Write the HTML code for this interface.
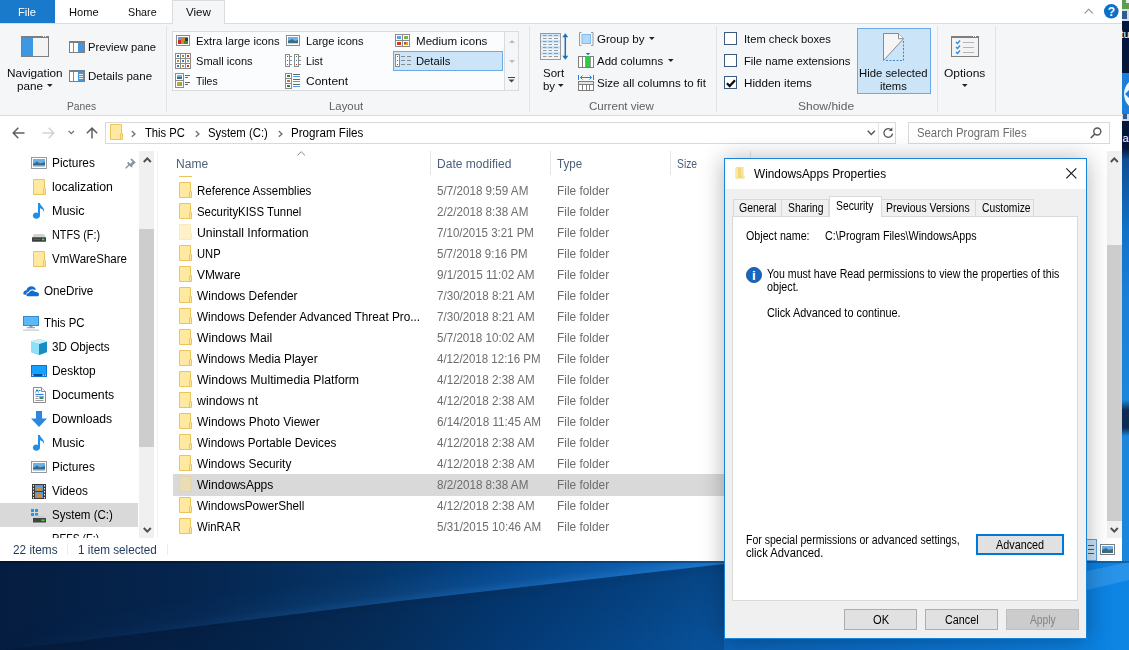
<!DOCTYPE html>
<html><head><meta charset="utf-8"><title>Program Files</title>
<style>
html,body{margin:0;padding:0}
body{width:1129px;height:650px;overflow:hidden;position:relative;font-family:"Liberation Sans",sans-serif;font-size:12px;
 background:#0a3f7c}
.a{position:absolute;box-sizing:border-box}
.t{position:absolute;white-space:nowrap;line-height:16px;height:16px;z-index:4}
.t.nav{z-index:2}
.t.fl{z-index:2}
.t.dlg{z-index:12}
svg{position:absolute;overflow:visible}
#desk{left:0;top:0;width:1129px;height:650px}
#strip{left:1122px;top:0;width:7px;height:561px;overflow:hidden;background:linear-gradient(180deg,#06153a 0,#06153a 148px,#0c4f95 160px,#1272c8 230px,#1a80d8 300px,#1a86dc 400px,#0c2c55 410px,#0c2c55 428px,#1a86dc 436px,#1a86dc 561px)}
#win{left:0;top:0;width:1122px;height:561px;background:#fff;z-index:1}
#tabline{left:0;top:23px;width:1122px;height:1px;background:#dadbdc}
#filetab{left:0;top:0;width:55px;height:23px;background:#1979ca}
#viewtab{left:172px;top:0;width:53px;height:24px;background:#f5f6f7;border:1px solid #dadbdc;border-bottom:none}
#ribbon{left:0;top:24px;width:1122px;height:92px;background:#f5f6f7;border-bottom:1px solid #dadbdc}
.gsep{width:1px;top:26px;height:86px;background:#e2e3e4}
#laybox{left:172px;top:31px;width:347px;height:60px;background:#fbfcfd;border:1px solid #dadbdc}
#layscroll{left:504px;top:31px;width:15px;height:60px;border:1px solid #dadbdc;background:#f5f6f7}
.sel{background:#cce4f7;border:1px solid #6aaae8}
#addr{left:105px;top:122px;width:791px;height:22px;border:1px solid #d9d9d9;background:#fff}
#search{left:908px;top:122px;width:202px;height:22px;border:1px solid #d9d9d9;background:#fff}
#navsb{left:139px;top:151px;width:15px;height:387px;background:#f0f0f0;z-index:3}
#navthumb{left:139px;top:229px;width:15px;height:218px;background:#cdcdcd;z-index:3}
#navsel{left:0;top:503px;width:138px;height:24px;background:#d9d9d9}
#flsb{left:1107px;top:151px;width:15px;height:387px;background:#f0f0f0}
#flthumb{left:1107px;top:245px;width:15px;height:276px;background:#cdcdcd}
#rowsel{left:173px;top:474px;width:700px;height:22px;background:#d9d9d9}
.csep{width:1px;top:151px;height:24px;background:#e5e5e5}
#status{left:0;top:538px;width:1122px;height:23px;background:#fff;z-index:3}
.ssep{width:1px;top:544px;height:11px;background:#ececec;z-index:4}
.cb{width:13px;height:13px;left:724px;border:1px solid #3b5a82;background:#fff}
/* dialog */
#dlg{left:724px;top:158px;width:363px;height:481px;background:#f0f0f0;border:1px solid #1883d7;z-index:10;box-shadow:0 1px 22px rgba(0,0,0,.30)}
#dtitle{left:725px;top:159px;width:361px;height:30px;background:#fff;z-index:11}
.tab{background:#f0f0f0;border:1px solid #d9d9d9;border-bottom:none;z-index:11;top:199px;height:18px}
#tabsel{background:#fff;top:196px;height:21px;z-index:13;border:1px solid #d9d9d9;border-bottom:none}
#tabpage{left:732px;top:216px;width:346px;height:385px;background:#fff;border:1px solid #d9d9d9;z-index:11}
.btn{background:#e1e1e1;border:1px solid #adadad;z-index:12;height:21px}
svg.i{z-index:3}
.t.dlg{z-index:14}
.t{transform-origin:0 0}

</style></head><body>
<svg width="0" height="0" style="left:-10px;top:-10px">
 <defs>
  <symbol id="folder" viewBox="0 0 13 16">
   <path d="M0.5 0.5h11v9h1v6h-12z" fill="#ffe8a0" stroke="#eac55c"/>
   <path d="M10.5 9.5v6" stroke="#eac55c" fill="none"/>
  </symbol>
  <symbol id="folderh" viewBox="0 0 13 16">
   <path d="M0.5 0.5h11v9h1v6h-12z" fill="#ffe38a" fill-opacity=".45" stroke="#e8c64c" stroke-opacity=".5" stroke-dasharray="1 1"/>
  </symbol>
 </defs>
</svg>
<div class="a" id="desk"><svg width="1129" height="650" style="left:0;top:0">
<defs>
<linearGradient id="dg" x1="0" y1="0" x2="1129" y2="0" gradientUnits="userSpaceOnUse">
<stop offset="0" stop-color="#051d40"/><stop offset=".18" stop-color="#052650"/><stop offset=".33" stop-color="#063568"/><stop offset=".45" stop-color="#04468c"/><stop offset=".55" stop-color="#0654a2"/><stop offset=".64" stop-color="#0a62b6"/><stop offset=".8" stop-color="#0a6fcb"/><stop offset=".96" stop-color="#0a80e0"/><stop offset="1" stop-color="#0f86e4"/>
</linearGradient>
<linearGradient id="dk" x1="400" y1="601" x2="409.500" y2="680" gradientUnits="userSpaceOnUse"><stop offset="0" stop-color="#02142f" stop-opacity=".42"/><stop offset=".15" stop-color="#02142f" stop-opacity=".34"/><stop offset="1" stop-color="#02142f" stop-opacity=".2"/></linearGradient>
<linearGradient id="bm" x1="400" y1="601" x2="396.400" y2="571" gradientUnits="userSpaceOnUse"><stop offset="0" stop-color="#3a96ea" stop-opacity=".38"/><stop offset=".25" stop-color="#3a96ea" stop-opacity=".16"/><stop offset="1" stop-color="#3a96ea" stop-opacity="0"/></linearGradient>
<linearGradient id="hm" x1="0" y1="0" x2="724" y2="0" gradientUnits="userSpaceOnUse"><stop offset="0" stop-color="#000"/><stop offset=".25" stop-color="#333"/><stop offset=".6" stop-color="#aaa"/><stop offset="1" stop-color="#fff"/></linearGradient>
<mask id="mk"><rect x="0" y="540" width="740" height="110" fill="url(#hm)"/></mask>
</defs>
<rect x="0" y="0" width="1129" height="650" fill="url(#dg)"/>
<polygon points="0,651 0,650.600 80,641 400,601 724,564 724,651" fill="url(#dk)"/>
<polygon points="0,650.600 80,641 400,601 724,564 724,540 0,540" fill="url(#bm)" mask="url(#mk)"/>
<polygon points="1087,571 1129,562 1129,580 1087,590" fill="#5ab0f0" fill-opacity=".35"/>
<rect x="0" y="561" width="1129" height="2" fill="#000" fill-opacity=".25"/>
</svg></div>
<div class="a" id="strip">
<div class="a" style="left:0;top:0;width:7px;height:9px;background:#5ca04e"></div>
<div class="a" style="left:4px;top:0;width:3px;height:3px;background:#e8efe6"></div>
<div class="a" style="left:0;top:9px;width:7px;height:12px;background:#d9dde2"></div>
<div class="a" style="left:0;top:11px;width:5px;height:8px;background:#2f5a94"></div>
<span style="position:absolute;left:-1.500px;top:28px;font-size:11px;line-height:12px;color:#fff;white-space:nowrap">tu</span>
<div class="a" style="left:0;top:73px;width:7px;height:41px;background:#1a7fd8"></div>
<div class="a" style="left:1.500px;top:77px;width:34px;height:34px;border-radius:17px;background:#f4f6f8"></div>
<div class="a" style="left:3px;top:89px;width:0;height:0;border-top:5px solid transparent;border-bottom:5px solid transparent;border-right:5px solid #1a7fd8"></div>
<div class="a" style="left:0;top:114px;width:7px;height:7px;background:#d4d9df"></div>
<div class="a" style="left:1px;top:114px;width:4px;height:5px;background:#2f5a94"></div>
<span style="position:absolute;left:.5px;top:132px;font-size:11px;line-height:12px;color:#fff;white-space:nowrap">ar</span>
</div>
<div class="a" id="win"></div>
<div class="a" id="tabline" style="z-index:1"></div>
<div class="a" id="ribbon" style="z-index:1"></div>
<div class="a" id="filetab" style="z-index:2"></div>
<div class="a" id="viewtab" style="z-index:2"></div>
<div class="a gsep" style="left:166px;z-index:2"></div>
<div class="a gsep" style="left:529px;z-index:2"></div>
<div class="a gsep" style="left:716px;z-index:2"></div>
<div class="a gsep" style="left:937px;z-index:2"></div>
<div class="a gsep" style="left:995px;z-index:2"></div>
<div class="a" id="laybox" style="z-index:2"></div>
<div class="a" id="layscroll" style="z-index:2"></div>
<div class="a sel" style="left:393px;top:51px;width:110px;height:20px;z-index:3"></div>
<div class="a sel" style="left:857px;top:28px;width:74px;height:66px;z-index:3"></div>
<div class="a cb" style="top:32px;z-index:3"></div>
<div class="a cb" style="top:54px;z-index:3"></div>
<div class="a cb" style="top:76px;z-index:3"></div>
<div class="a" id="addr" style="z-index:2"></div>
<div class="a" style="left:878px;top:123px;width:1px;height:20px;background:#e5e5e5;z-index:3"></div>
<div class="a" id="search" style="z-index:2"></div>
<div class="a" id="navsel" style="z-index:1"></div>
<div class="a" id="navsb"></div>
<div class="a" id="navthumb"></div>
<div class="a" id="rowsel" style="z-index:1"></div>
<div class="a" id="flsb" style="z-index:2"></div>
<div class="a" id="flthumb" style="z-index:2"></div>
<div class="a csep" style="left:430px;z-index:2"></div>
<div class="a csep" style="left:550px;z-index:2"></div>
<div class="a csep" style="left:670px;z-index:2"></div>
<div class="a csep" style="left:750px;z-index:2"></div>
<div class="a" style="left:157px;top:151px;width:1px;height:387px;background:#f2f2f2;z-index:2"></div>
<div class="a" id="status"></div>
<div class="a ssep" style="left:67px"></div>
<div class="a ssep" style="left:167px"></div>
<!-- ===== ribbon icons ===== -->
<!-- nav pane big icon 28x21 @21,36 -->
<svg class="i" style="left:21px;top:36px" width="28" height="21"><rect x=".5" y=".5" width="27" height="20" fill="#f3f3f3" stroke="#7e7e7e"/><rect x="0" y="0" width="28" height="2" fill="#7e7e7e"/><rect x="1" y="2" width="11" height="18" fill="#3e97e1"/><rect x="22" y="0" width="1" height="1" fill="#fff"/><rect x="24" y="0" width="1" height="1" fill="#fff"/></svg>
<!-- preview pane 16x12 @69,41 -->
<svg class="i" style="left:69px;top:41px" width="16" height="12"><rect x=".5" y=".5" width="15" height="11" fill="#fff" stroke="#7e7e7e"/><rect x="0" y="0" width="16" height="2" fill="#7e7e7e"/><rect x="4" y="2" width="1" height="9" fill="#8a8a8a"/><rect x="9" y="2" width="6" height="9" fill="#3e97e1"/></svg>
<!-- details pane 16x12 @69,70 -->
<svg class="i" style="left:69px;top:70px" width="16" height="12"><rect x=".5" y=".5" width="15" height="11" fill="#fff" stroke="#7e7e7e"/><rect x="0" y="0" width="16" height="2" fill="#7e7e7e"/><rect x="4" y="2" width="1" height="9" fill="#8a8a8a"/><rect x="9" y="2" width="6" height="9" fill="#3e97e1"/><path d="M10 4.5h4M10 6.5h4M10 8.5h4" stroke="#e6f2fc" stroke-width="1"/></svg>
<!-- dropdown arrows -->
<svg class="i" style="left:47px;top:84px" width="6" height="3"><path d="M0 0h5.6L2.8 3z" fill="#222"/></svg>
<svg class="i" style="left:558px;top:84px" width="6" height="3"><path d="M0 0h5.6L2.8 3z" fill="#222"/></svg>
<svg class="i" style="left:648.5px;top:37px" width="6" height="3"><path d="M0 0h5.6L2.8 3z" fill="#222"/></svg>
<svg class="i" style="left:667.5px;top:59px" width="6" height="3"><path d="M0 0h5.6L2.8 3z" fill="#222"/></svg>
<svg class="i" style="left:962px;top:84px" width="6" height="3"><path d="M0 0h5.6L2.8 3z" fill="#222"/></svg>
<!-- extra large icons 14x11 @176,35 -->
<svg class="i" style="left:176px;top:35px" width="14" height="11"><rect x=".5" y=".5" width="13" height="10" fill="#fff" stroke="#8a8a8a"/><rect x="2" y="2" width="10" height="7" fill="#5aa0e0"/><rect x="2" y="5" width="3" height="4" fill="#d9281e"/><rect x="5" y="3" width="4" height="6" fill="#c98a2c"/><rect x="8" y="6" width="4" height="3" fill="#3d8a3a"/><rect x="9" y="3" width="3" height="3" fill="#26374f"/></svg>
<!-- large icons 14x11 @286,35 -->
<svg class="i" style="left:286px;top:35px" width="14" height="11"><rect x=".5" y=".5" width="13" height="10" fill="#fff" stroke="#8a8a8a"/><rect x="2" y="2" width="10" height="7" fill="#6db3ea"/><path d="M2 6l4-2 3 2 3-1v4H2z" fill="#3f6d7e"/><rect x="2" y="8" width="10" height="1" fill="#b5d9f2"/></svg>
<!-- medium icons 15x13 @395,34 -->
<svg class="i" style="left:395px;top:34px" width="15" height="13"><rect x=".5" y=".5" width="14" height="12" fill="#fff" stroke="#8a8a8a"/><path d="M7.5 0v13M0 6.5h15" stroke="#8a8a8a"/><rect x="2" y="2" width="4" height="3" fill="#5aa0e0"/><rect x="9" y="2" width="4" height="3" fill="#7fae56"/><rect x="2" y="8" width="4" height="3" fill="#d8341e"/><rect x="9" y="8" width="4" height="3" fill="#e7a01e"/><rect x="9" y="8" width="2" height="2" fill="#3a6fb5"/></svg>
<!-- small icons 16x16 @175,53 -->
<svg class="i" style="left:175px;top:53px" width="16" height="16"><rect x=".5" y=".5" width="15" height="15" fill="#fff" stroke="#8a8a8a"/><path d="M5.5 0v16M10.5 0v16M0 5.5h16M0 10.5h16" stroke="#8a8a8a"/><g><rect x="2" y="2" width="2" height="2" fill="#3a78b5"/><rect x="7" y="2" width="2" height="2" fill="#6f9a4e"/><rect x="12" y="2" width="2" height="2" fill="#d8341e"/><rect x="2" y="7" width="2" height="2" fill="#c98a2c"/><rect x="7" y="7" width="2" height="2" fill="#2f80d0"/><rect x="12" y="7" width="2" height="2" fill="#9aa54e"/><rect x="2" y="12" width="2" height="2" fill="#3a78b5"/><rect x="7" y="12" width="2" height="2" fill="#c98a2c"/><rect x="12" y="12" width="2" height="2" fill="#d8341e"/></g></svg>
<!-- list 16x13 @285,54 -->
<svg class="i" style="left:285px;top:54px" width="16" height="13"><g id="lcol"><rect x=".5" y=".5" width="4" height="12" fill="#fff" stroke="#8a8a8a"/><rect x="2" y="2" width="1" height="1" fill="#3f8a3a"/><rect x="2" y="6" width="1" height="1" fill="#2f80d0"/><rect x="2" y="10" width="1" height="1" fill="#d8241e"/><path d="M5 2.5h2M5 6.5h2M5 10.5h2" stroke="#8a8a8a"/></g><g transform="translate(9,0)"><rect x=".5" y=".5" width="4" height="12" fill="#fff" stroke="#8a8a8a"/><rect x="2" y="2" width="1" height="1" fill="#3f8a3a"/><rect x="2" y="6" width="1" height="1" fill="#2f80d0"/><rect x="2" y="10" width="1" height="1" fill="#d8241e"/><path d="M5 2.5h2M5 6.5h2M5 10.5h2" stroke="#8a8a8a"/></g></svg>
<!-- details 16x13 @395,54 -->
<svg class="i" style="left:395px;top:54px" width="16" height="13"><rect x=".5" y=".5" width="4" height="12" fill="#fff" stroke="#8a8a8a"/><rect x="2" y="2" width="1" height="1" fill="#3f8a3a"/><rect x="2" y="6" width="1" height="1" fill="#2f80d0"/><rect x="2" y="10" width="1" height="1" fill="#d8241e"/><path d="M6 2.5h4M12 2.5h4M6 6.5h4M12 6.5h4M6 10.5h4M12 10.5h4" stroke="#8a8a8a"/></svg>
<!-- tiles 16x15 @175,73 -->
<svg class="i" style="left:175px;top:73px" width="16" height="15"><rect x=".5" y=".5" width="8" height="14" fill="#fff" stroke="#8a8a8a"/><path d="M0 7.5h9" stroke="#8a8a8a"/><rect x="2" y="2" width="5" height="4" fill="#6db3ea"/><rect x="2" y="4" width="5" height="2" fill="#3f6d7e"/><rect x="2" y="9" width="5" height="4" fill="#7fae56"/><rect x="2" y="9" width="3" height="3" fill="#dba035"/><path d="M10 2.5h5M10 4.5h3M10 9.5h5M10 11.5h3" stroke="#666"/></svg>
<!-- content 15x16 @285,73 -->
<svg class="i" style="left:285px;top:73px" width="16" height="16"><rect x=".5" y=".5" width="6" height="15" fill="#fff" stroke="#8a8a8a"/><path d="M0 5.5h7M0 10.5h7" stroke="#8a8a8a"/><rect x="2" y="2" width="3" height="2" fill="#3f7a5e"/><rect x="2" y="7" width="3" height="2" fill="#c9762c"/><rect x="2" y="12" width="3" height="2" fill="#3f7a5e"/><path d="M8 1.500h7M8 6.5h7M8 11.5h7" stroke="#666"/><path d="M8 3.500h7M8 8.5h7M8 13.5h7" stroke="#4a9be8"/></svg>
<!-- layout scroll arrows -->
<svg class="i" style="left:509px;top:40px" width="6" height="3"><path d="M0 3h6L3 0z" fill="#b4bcc4"/></svg>
<svg class="i" style="left:509px;top:60px" width="6" height="3"><path d="M0 0h6L3 3z" fill="#b4bcc4"/></svg>
<svg class="i" style="left:508px;top:77px" width="7" height="6"><path d="M0 .5h7" stroke="#444"/><path d="M.5 2.500h6L3.500 5.500z" fill="#444"/></svg>
<!-- sort icon @540,33 29x27 -->
<svg class="i" style="left:540px;top:33px" width="29" height="27"><rect x=".5" y=".5" width="20" height="26" fill="#f4f4f4" stroke="#9a9a9a"/><rect x="1" y="1" width="19" height="3" fill="#cfe5f7"/><rect x="1" y="7" width="19" height="3" fill="#cfe5f7"/><rect x="1" y="13" width="19" height="3" fill="#cfe5f7"/><rect x="1" y="19" width="19" height="3" fill="#cfe5f7"/><path d="M3 2.500h3.500M8.500 2.500h3.500M14 2.500h4M3 5.500h3.500M8.500 5.500h3.500M14 5.500h4M3 8.500h3.500M8.500 8.500h3.500M14 8.500h4M3 11.500h3.500M8.500 11.500h3.500M14 11.500h4M3 14.500h3.500M8.500 14.500h3.500M14 14.500h4M3 17.500h3.500M8.500 17.500h3.500M14 17.500h4M3 20.500h3.500M8.500 20.500h3.500M14 20.500h4M3 23.500h3.500M8.500 23.500h3.500M14 23.500h4" stroke="#9a9a9a"/><path d="M25.300 3v21" stroke="#1e6fc0" stroke-width="1.500"/><path d="M22.300 4.300L25.300 .3l3 4zM22.300 22.700l3 4 3-4z" fill="#1e6fc0"/></svg>
<!-- group by @579,32 14x14 -->
<svg class="i" style="left:578.500px;top:32px" width="15" height="14"><path d="M2.500 .5h-2v13h2M12 .5h2v13h-2" stroke="#9a9a9a" fill="none"/><rect x="3" y="2.500" width="8.500" height="9" fill="#b4d8f6" stroke="#7cbcf0"/></svg>
<!-- add columns @578,53 -->
<svg class="i" style="left:578px;top:53px" width="16" height="15"><path d="M7.700 0h4.600L10 2.300z" fill="#1e6fc0"/><rect x=".5" y="3.500" width="15" height="11" fill="#fff" stroke="#7e7e7e"/><path d="M4.500 4v10" stroke="#7e7e7e"/><rect x="8" y="3" width="4" height="11" fill="#2ecc40"/><path d="M7.500 4v10M12.500 4v10" stroke="#7e7e7e" stroke-opacity=".8"/></svg>
<!-- size all columns @578,75 -->
<svg class="i" style="left:578px;top:75px" width="16" height="16"><path d="M.5 0v5M15.500 0v5" stroke="#2a7fd6"/><path d="M2.500 2.500h11" stroke="#2a7fd6"/><path d="M4.500 .5l-2 2 2 2M11.500 .5l2 2-2 2" stroke="#2a7fd6" fill="none"/><rect x=".5" y="6.500" width="15" height="9" fill="#fff" stroke="#7e7e7e"/><rect x="1" y="7" width="14" height="2" fill="#e4e4e4"/><path d="M0 9.500h16M4.500 9.500v6M8.500 9.500v6M11.500 9.500v6" stroke="#7e7e7e"/></svg>
<!-- check mark -->
<svg class="i" style="left:726px;top:78.500px;z-index:4" width="10" height="9"><path d="M.9 4.200L3.700 7L9 1.200" stroke="#111" stroke-width="2.300" fill="none"/></svg>
<!-- hide selected @883,33 21x28 -->
<svg class="i" style="left:883px;top:33px;z-index:4" width="22" height="28"><path d="M.5 .5h15l5 5.200L.5 27.500z" fill="#f5f5f5" stroke="#8a8a8a"/><path d="M15.500 .5v5.200h5" fill="#fff" stroke="#8a8a8a"/><path d="M20.500 8v19.500h-18" stroke="#2a8ae0" stroke-dasharray="2 1.500" fill="none"/></svg>
<!-- options @951,36 28x21 -->
<svg class="i" style="left:951px;top:36px" width="28" height="21"><rect x=".5" y=".5" width="27" height="20" fill="#f3f3f3" stroke="#7e7e7e"/><rect x="0" y="0" width="28" height="2" fill="#7e7e7e"/><rect x="22" y="0" width="1" height="1" fill="#fff"/><rect x="24" y="0" width="1" height="1" fill="#fff"/><path d="M12 6.500h11M12 11.500h11M12 16.500h11" stroke="#b5b5b5"/><path d="M5 6l1.500 1.500L9 4.500M5 11l1.500 1.500L9 9.500M5 16l1.500 1.500L9 14.500" stroke="#2a8ae0" stroke-width="1.300" fill="none"/></svg>
<!-- top right chevron and help -->
<svg class="i" style="left:1084px;top:8px" width="10" height="6"><path d="M.7 5.300L4.700 1.200l4 4.100" stroke="#8a8a8a" stroke-width="1.100" fill="none"/></svg>
<svg class="i" style="left:1104px;top:4px" width="15" height="15"><circle cx="7.300" cy="7.300" r="7.300" fill="#0a70c8"/><text x="7.400" y="11.600" font-family="Liberation Sans, sans-serif" font-size="12" font-weight="bold" fill="#fff" text-anchor="middle">?</text></svg>
<!-- ===== address bar ===== -->
<svg class="i" style="left:12px;top:127px" width="13" height="12"><path d="M12.500 6h-11M6.300 .8L1.200 6l5.100 5.200" stroke="#5f5f5f" stroke-width="1.500" fill="none"/></svg>
<svg class="i" style="left:41.500px;top:127px" width="13" height="12"><path d="M.5 6h11M6.700 .8L11.800 6l-5.100 5.200" stroke="#d2d2d2" stroke-width="1.500" fill="none"/></svg>
<svg class="i" style="left:68px;top:130px" width="7" height="5"><path d="M.6 .8L3.300 3.600L6 .8" stroke="#6a6a6a" stroke-width="1.200" fill="none"/></svg>
<svg class="i" style="left:86px;top:127px" width="12" height="12"><path d="M6 11.500V1M.8 6.300L6 1.100l5.200 5.200" stroke="#5f5f5f" stroke-width="1.500" fill="none"/></svg>
<svg class="i" style="left:110px;top:124px" width="14" height="16"><use href="#folder" width="13" height="16"/></svg>
<svg class="i" style="left:131px;top:129.500px" width="5" height="8"><path d="M.8 1.100L3.900 3.900L.8 6.700" stroke="#707070" stroke-width="1.350" fill="none"/></svg>
<svg class="i" style="left:194.500px;top:129.500px" width="5" height="8"><path d="M.8 1.100L3.900 3.900L.8 6.700" stroke="#707070" stroke-width="1.350" fill="none"/></svg>
<svg class="i" style="left:278px;top:129.500px" width="5" height="8"><path d="M.8 1.100L3.900 3.900L.8 6.700" stroke="#707070" stroke-width="1.350" fill="none"/></svg>
<svg class="i" style="left:867px;top:130px" width="9" height="6"><path d="M.7 .8L4.300 4.500L7.900 .8" stroke="#555" stroke-width="1.400" fill="none"/></svg>
<svg class="i" style="left:883px;top:127px" width="11" height="12"><path d="M8.600 3.300A4.300 4.300 0 1 0 9.500 6.600" stroke="#555" stroke-width="1.300" fill="none"/><path d="M5.800 3.900h3.600V.3z" fill="#555"/></svg>
<svg class="i" style="left:1090px;top:127px" width="12" height="12"><circle cx="7.300" cy="4.500" r="3.500" stroke="#555" stroke-width="1.400" fill="none"/><path d="M4.800 7L.8 11" stroke="#555" stroke-width="1.700"/></svg>
<!-- sort chevron in header -->
<svg class="i" style="left:297px;top:151px" width="9" height="5"><path d="M.5 4.300L4.200 .7l3.700 3.600" stroke="#8a8a8a" stroke-width="1" fill="none"/></svg>
<!-- ===== nav icons ===== -->
<svg class="i" style="left:31px;top:157px" width="16" height="12"><rect x=".5" y=".5" width="15" height="11" fill="#fff" stroke="#9a9a9a"/><rect x="2" y="2" width="12" height="8" fill="#69b1ea"/><path d="M2 7l4-2.500 3 2 5-1.500v5H2z" fill="#3e6b80"/><rect x="2" y="8.500" width="12" height="1.500" fill="#a9d3f0"/></svg>
<svg class="i" style="left:31px;top:461px" width="16" height="12"><rect x=".5" y=".5" width="15" height="11" fill="#fff" stroke="#9a9a9a"/><rect x="2" y="2" width="12" height="8" fill="#69b1ea"/><path d="M2 7l4-2.500 3 2 5-1.500v5H2z" fill="#3e6b80"/><rect x="2" y="8.500" width="12" height="1.500" fill="#a9d3f0"/></svg>
<svg class="i" style="left:33px;top:179px" width="13" height="16"><use href="#folder" width="13" height="16"/></svg>
<svg class="i" style="left:33px;top:251px" width="13" height="16"><use href="#folder" width="13" height="16"/></svg>
<svg class="i" style="left:33px;top:203px" width="12" height="16"><path d="M5 0h2c0 3.200 5.400 4 4 9.500c-.2-3-2.500-3.800-4-4.300V12.700a3.600 3.100 0 1 1-2-2.800z" fill="#1e8fea"/></svg>
<svg class="i" style="left:33px;top:435px" width="12" height="16"><path d="M5 0h2c0 3.200 5.400 4 4 9.500c-.2-3-2.500-3.800-4-4.300V12.700a3.600 3.100 0 1 1-2-2.800z" fill="#1e8fea"/></svg>
<svg class="i" style="left:32px;top:234px" width="14" height="8"><path d="M2 0h10l2 3.500H0z" fill="#d2d2d2"/><rect x="0" y="3.300" width="14" height="4.400" rx=".6" fill="#3c3c3c"/><rect x="1.500" y="4.800" width="7" height="1.200" fill="#5a5a5a"/><rect x="10" y="4.600" width="2.400" height="1.700" fill="#39e048"/></svg>
<svg class="i" style="left:23px;top:285.500px" width="16" height="11"><path d="M.3 7.600C.3 5.200 2 4.200 3.500 4.200C4 1.700 6.500 .1 9 .3C11 .5 12.600 2 13 3.600L11.600 4.100C10 2.600 7 3.100 5.400 6C4 6 3.300 7 3.200 8.500C2 9.100 .3 8.800 .3 7.600z" fill="#0f6fd0"/><path d="M4.600 10.300C2.800 10.300 2.900 7.300 5.800 7.100C6.600 4.100 10.600 3.600 12.100 6.100C14.600 5.600 16 7.100 16 8.400C16 9.600 15 10.300 14 10.300z" fill="#0f6fd0"/></svg>
<svg class="i" style="left:23px;top:316px" width="16" height="15"><rect x=".5" y=".5" width="15" height="9" fill="#5cb8f6" stroke="#3a88d0"/><rect x="6.500" y="10" width="3" height="1.500" fill="#8a9aa8"/><rect x="4" y="11.200" width="8" height="1" fill="#8a9aa8"/><rect x="0" y="13.600" width="16" height=".9" fill="#b0b8c0"/></svg>
<svg class="i" style="left:31px;top:339px" width="16" height="16"><path d="M8 0l8 2.500v10.500l-8 3-8-3V2.500z" fill="#35c0e8"/><path d="M0 2.500l8 2.500v11l-8-3z" fill="#8fe0f5"/><path d="M8 5l8-2.500v10.500l-8 3z" fill="#1a8cc4"/><path d="M0 2.500L8 0l8 2.500L8 5z" fill="#c8f0fb"/></svg>
<svg class="i" style="left:31px;top:365px" width="16" height="12"><rect x=".5" y=".5" width="15" height="11" fill="#14a0ff" stroke="#0b74d4"/><rect x="1" y="9" width="14" height="2" fill="#0a4f9c"/><rect x="1" y="9.500" width="1.500" height="1.200" fill="#fff"/><rect x="11.500" y="9.500" width="1.500" height="1.200" fill="#fff"/><rect x="13.700" y="9.500" width="1.300" height="1.200" fill="#fff"/></svg>
<svg class="i" style="left:33px;top:386.500px" width="13" height="16"><path d="M.5 .5h8l4 4v11H.5z" fill="#fff" stroke="#8a8a8a"/><path d="M8.500 .5v4h4" fill="#f4f4f4" stroke="#8a8a8a"/><path d="M2.500 5.500l1.500-3 1.500 3" stroke="#2a7fd6" fill="none"/><path d="M5.500 3.500h2" stroke="#2a7fd6"/><path d="M2.500 7.500h8" stroke="#2a7fd6" stroke-width="1.200"/><path d="M2.500 9.500h3M2.500 11.500h3" stroke="#9a9a9a"/><rect x="6.500" y="9" width="4" height="3" fill="#3f8a4e"/><rect x="6.500" y="9" width="4" height="1.200" fill="#6db3ea"/><path d="M2.500 13.500h8" stroke="#9a9a9a"/></svg>
<svg class="i" style="left:31px;top:411px" width="16" height="16"><path d="M5 0h6v7.500h5L8 16L0 7.500h5z" fill="#2b88de"/></svg>
<svg class="i" style="left:32px;top:484px" width="14" height="15"><rect x="0" y="0" width="14" height="15" fill="#3a3a3a"/><rect x="3" y="1" width="8" height="6" fill="#5a9bd8"/><rect x="3" y="8" width="8" height="6" fill="#5a9bd8"/><rect x="4.500" y="3" width="5" height="4" fill="#d98a2e"/><rect x="4.500" y="10" width="5" height="4" fill="#d98a2e"/><path d="M1.500 1v14M12.500 1v14" stroke="#f2f2f2" stroke-dasharray="1.500 1.500"/></svg>
<svg class="i" style="left:31px;top:508.500px" width="16" height="14"><rect x="0" y="0" width="3" height="3" fill="#1f98f0"/><rect x="4" y="0" width="3" height="3" fill="#1f98f0"/><rect x="0" y="4" width="3" height="3" fill="#1f98f0"/><rect x="4" y="4" width="3" height="3" fill="#1f98f0"/><path d="M4 6.500h9l2 3H2z" fill="#cfcfcf"/><rect x="2" y="9" width="13" height="4.500" fill="#444"/><rect x="10.500" y="10.500" width="3" height="1.500" fill="#3fe04a"/></svg>
<svg class="i" style="left:125px;top:158px;z-index:3" width="11" height="11"><path d="M6.200 .4l4.400 4.400l-1.300.6l-2.100 2.300l.1 2.200L3.100 5.700l2.200.1l2.300-2.100z" fill="#8794a6"/><path d="M6 1l4 4" stroke="#8794a6" stroke-width="1.700"/><path d="M4.700 6.300L.7 10.300" stroke="#8794a6" stroke-width="1.300"/><path d="M2.600 4.400L6.600 8.400" stroke="#8794a6" stroke-width="1.800"/></svg>
<!-- scrollbar arrows -->
<svg class="i" style="left:142.500px;top:157px;z-index:4" width="9" height="6"><path d="M.8 5L4.300 1.300L7.800 5" stroke="#4d4d4d" stroke-width="1.900" fill="none"/></svg>
<svg class="i" style="left:143px;top:527px;z-index:4" width="9" height="6"><path d="M.8 1L4.300 4.700L7.800 1" stroke="#4d4d4d" stroke-width="1.900" fill="none"/></svg>
<svg class="i" style="left:1109.500px;top:157px;z-index:4" width="9" height="6"><path d="M.8 5L4.300 1.300L7.800 5" stroke="#4d4d4d" stroke-width="1.900" fill="none"/></svg>
<svg class="i" style="left:1110px;top:527px;z-index:4" width="9" height="6"><path d="M.8 1L4.300 4.700L7.800 1" stroke="#4d4d4d" stroke-width="1.900" fill="none"/></svg>
<!-- status view buttons -->
<div class="a" style="left:1080px;top:539px;width:17px;height:22px;background:#cce4f7;border:1px solid #5ba0e0;z-index:4"></div>
<svg class="i" style="left:1084px;top:544px;z-index:5" width="10" height="11"><path d="M0 1.500h2M4 1.500h6M0 5.500h2M4 5.500h6M0 9.500h2M4 9.500h6" stroke="#555"/></svg>
<svg class="i" style="left:1100px;top:543.500px;z-index:5" width="15" height="11"><rect x=".5" y=".5" width="14" height="10" fill="#fff" stroke="#7e7e7e"/><rect x="2" y="2" width="11" height="7" fill="#69b1ea"/><path d="M2 6l4-2 3 2 4-1v4H2z" fill="#3e6b80"/></svg>
<!-- dialog icons -->
<svg class="i" style="left:735px;top:167px;z-index:14" width="10" height="13"><path d="M1 .3h7.500v7.700l1 .5v3H2z" fill="#f4d875"/><path d="M.2 .5L3 1.800V13L.2 11z" fill="#fbe8a4"/><path d="M6 2h2.200M6 4h2.200M6.500 6h2M6.500 8h2.500M7 10h2.300" stroke="#fdf4d4" stroke-width=".9"/></svg>
<svg class="i" style="left:1066px;top:168px;z-index:14" width="11" height="11"><path d="M.3 .3l10 10M10.300 .3L.3 10.300" stroke="#1a1a1a" stroke-width="1.150"/></svg>
<svg class="i" style="left:746px;top:267px;z-index:14" width="16" height="16"><circle cx="8" cy="8" r="7.600" fill="#1767c0" stroke="#0f4f9c" stroke-width=".8"/><text x="8" y="13" font-family="Liberation Sans, sans-serif" font-size="13.500" font-weight="bold" fill="#fff" text-anchor="middle">i</text></svg>

<svg class="i" style="left:179px;top:182px" width="13" height="16"><use href="#folder" width="13" height="16"/></svg>
<svg class="i" style="left:179px;top:203px" width="13" height="16"><use href="#folder" width="13" height="16"/></svg>
<svg class="i" style="left:179px;top:224px" width="13" height="16"><use href="#folderh" width="13" height="16"/></svg>
<svg class="i" style="left:179px;top:245px" width="13" height="16"><use href="#folder" width="13" height="16"/></svg>
<svg class="i" style="left:179px;top:266px" width="13" height="16"><use href="#folder" width="13" height="16"/></svg>
<svg class="i" style="left:179px;top:287px" width="13" height="16"><use href="#folder" width="13" height="16"/></svg>
<svg class="i" style="left:179px;top:308px" width="13" height="16"><use href="#folder" width="13" height="16"/></svg>
<svg class="i" style="left:179px;top:329px" width="13" height="16"><use href="#folder" width="13" height="16"/></svg>
<svg class="i" style="left:179px;top:350px" width="13" height="16"><use href="#folder" width="13" height="16"/></svg>
<svg class="i" style="left:179px;top:371px" width="13" height="16"><use href="#folder" width="13" height="16"/></svg>
<svg class="i" style="left:179px;top:392px" width="13" height="16"><use href="#folder" width="13" height="16"/></svg>
<svg class="i" style="left:179px;top:413px" width="13" height="16"><use href="#folder" width="13" height="16"/></svg>
<svg class="i" style="left:179px;top:434px" width="13" height="16"><use href="#folder" width="13" height="16"/></svg>
<svg class="i" style="left:179px;top:455px" width="13" height="16"><use href="#folder" width="13" height="16"/></svg>
<svg class="i" style="left:179px;top:476px" width="13" height="16"><use href="#folderh" width="13" height="16"/></svg>
<svg class="i" style="left:179px;top:497px" width="13" height="16"><use href="#folder" width="13" height="16"/></svg>
<svg class="i" style="left:179px;top:518px" width="13" height="16"><use href="#folder" width="13" height="16"/></svg>
<div class="a" style="left:179px;top:176px;width:13px;height:1px;background:#eac55c;z-index:2"></div>
<div class="a" id="dlg"></div>
<div class="a" id="dtitle"></div>
<div class="a tab" style="left:733px;width:49px"></div>
<div class="a tab" style="left:781px;width:48px"></div>
<div class="a tab" style="left:881px;width:95px"></div>
<div class="a tab" style="left:975px;width:59px"></div>
<div class="a" id="tabpage"></div>
<div class="a" id="tabsel" style="left:829px;width:53px"></div>
<div class="a btn" style="left:844px;top:609px;width:73px"></div>
<div class="a btn" style="left:925px;top:609px;width:73px"></div>
<div class="a btn" style="left:1006px;top:609px;width:73px;background:#ccc;border-color:#bfbfbf"></div>
<div class="a btn" style="left:976px;top:534px;width:88px;border:2px solid #0078d7"></div>
<span class="t " id="t0" style="left:17.60px;top:4.02px;font-size:11.5px;color:#fff;transform:scaleX(0.9767);">File</span>
<span class="t " id="t1" style="left:68.90px;top:4.02px;font-size:11.5px;color:#0c0c0c;transform:scaleX(0.9646);">Home</span>
<span class="t " id="t2" style="left:127.90px;top:4.02px;font-size:11.5px;color:#0c0c0c;transform:scaleX(0.9320);">Share</span>
<span class="t " id="t3" style="left:186.20px;top:4.02px;font-size:11.5px;color:#0c0c0c;transform:scaleX(1.0073);">View</span>
<span class="t " id="t4" style="left:6.60px;top:65.02px;font-size:11.5px;color:#0c0c0c;transform:scaleX(1.0231);">Navigation</span>
<span class="t " id="t5" style="left:17.40px;top:78.02px;font-size:11.5px;color:#0c0c0c;transform:scaleX(1.0198);">pane</span>
<span class="t " id="t6" style="left:87.60px;top:39.02px;font-size:11.5px;color:#0c0c0c;transform:scaleX(0.9772);">Preview pane</span>
<span class="t " id="t7" style="left:87.60px;top:68.02px;font-size:11.5px;color:#0c0c0c;transform:scaleX(1.0025);">Details pane</span>
<span class="t " id="t8" style="left:67.10px;top:98.02px;font-size:11.5px;color:#5c6166;transform:scaleX(0.8924);">Panes</span>
<span class="t " id="t9" style="left:195.60px;top:33.02px;font-size:11.5px;color:#0c0c0c;transform:scaleX(0.9760);">Extra large icons</span>
<span class="t " id="t10" style="left:195.60px;top:53.02px;font-size:11.5px;color:#0c0c0c;transform:scaleX(0.9624);">Small icons</span>
<span class="t " id="t11" style="left:195.60px;top:73.02px;font-size:11.5px;color:#0c0c0c;transform:scaleX(0.9053);">Tiles</span>
<span class="t " id="t12" style="left:305.60px;top:33.02px;font-size:11.5px;color:#0c0c0c;transform:scaleX(0.9686);">Large icons</span>
<span class="t " id="t13" style="left:305.60px;top:53.02px;font-size:11.5px;color:#0c0c0c;transform:scaleX(0.9271);">List</span>
<span class="t " id="t14" style="left:305.60px;top:73.02px;font-size:11.5px;color:#0c0c0c;transform:scaleX(1.0452);">Content</span>
<span class="t " id="t15" style="left:415.85px;top:33.02px;font-size:11.5px;color:#0c0c0c;transform:scaleX(1.0056);">Medium icons</span>
<span class="t " id="t16" style="left:415.85px;top:53.02px;font-size:11.5px;color:#0c0c0c;transform:scaleX(0.9771);">Details</span>
<span class="t " id="t17" style="left:328.60px;top:98.02px;font-size:11.5px;color:#5c6166;transform:scaleX(0.9875);">Layout</span>
<span class="t " id="t18" style="left:542.85px;top:65.02px;font-size:11.5px;color:#0c0c0c;transform:scaleX(1.0003);">Sort</span>
<span class="t " id="t19" style="left:542.85px;top:78.02px;font-size:11.5px;color:#0c0c0c;transform:scaleX(0.9954);">by</span>
<span class="t " id="t20" style="left:596.60px;top:31.02px;font-size:11.5px;color:#0c0c0c;transform:scaleX(1.0061);">Group by</span>
<span class="t " id="t21" style="left:596.60px;top:53.02px;font-size:11.5px;color:#0c0c0c;transform:scaleX(0.9942);">Add columns</span>
<span class="t " id="t22" style="left:596.60px;top:75.02px;font-size:11.5px;color:#0c0c0c;transform:scaleX(1.0077);">Size all columns to fit</span>
<span class="t " id="t23" style="left:588.60px;top:98.02px;font-size:11.5px;color:#5c6166;transform:scaleX(1.0045);">Current view</span>
<span class="t " id="t24" style="left:744.20px;top:31.02px;font-size:11.5px;color:#0c0c0c;transform:scaleX(0.9706);">Item check boxes</span>
<span class="t " id="t25" style="left:744.20px;top:53.02px;font-size:11.5px;color:#0c0c0c;transform:scaleX(0.9786);">File name extensions</span>
<span class="t " id="t26" style="left:744.20px;top:75.02px;font-size:11.5px;color:#0c0c0c;transform:scaleX(1.0108);">Hidden items</span>
<span class="t " id="t27" style="left:858.60px;top:65.02px;font-size:11.5px;color:#0c0c0c;transform:scaleX(0.9844);">Hide selected</span>
<span class="t " id="t28" style="left:880.30px;top:78.02px;font-size:11.5px;color:#0c0c0c;transform:scaleX(0.9769);">items</span>
<span class="t " id="t29" style="left:797.85px;top:98.02px;font-size:11.5px;color:#5c6166;transform:scaleX(1.0443);">Show/hide</span>
<span class="t " id="t30" style="left:943.60px;top:65.02px;font-size:11.5px;color:#0c0c0c;transform:scaleX(1.0431);">Options</span>
<span class="t " id="t31" style="left:145.10px;top:124.84px;font-size:12px;color:#000;transform:scaleX(0.9347);">This PC</span>
<span class="t " id="t32" style="left:207.65px;top:124.84px;font-size:12px;color:#000;transform:scaleX(0.9448);">System (C:)</span>
<span class="t " id="t33" style="left:290.65px;top:124.84px;font-size:12px;color:#000;transform:scaleX(0.9687);">Program Files</span>
<span class="t " id="t34" style="left:916.90px;top:124.84px;font-size:12px;color:#6d6d6d;transform:scaleX(0.9444);">Search Program Files</span>
<span class="t nav" id="t35" style="left:51.70px;top:154.84px;font-size:12px;color:#000;transform:scaleX(0.9894);">Pictures</span>
<span class="t nav" id="t36" style="left:51.70px;top:178.84px;font-size:12px;color:#000;transform:scaleX(1.0257);">localization</span>
<span class="t nav" id="t37" style="left:51.70px;top:202.84px;font-size:12px;color:#000;transform:scaleX(1.0401);">Music</span>
<span class="t nav" id="t38" style="left:51.70px;top:226.84px;font-size:12px;color:#000;transform:scaleX(0.9020);">NTFS (F:)</span>
<span class="t nav" id="t39" style="left:51.70px;top:250.84px;font-size:12px;color:#000;transform:scaleX(0.9572);">VmWareShare</span>
<span class="t nav" id="t40" style="left:44.30px;top:282.84px;font-size:12px;color:#000;transform:scaleX(0.9726);">OneDrive</span>
<span class="t nav" id="t41" style="left:44.30px;top:314.84px;font-size:12px;color:#000;transform:scaleX(0.9488);">This PC</span>
<span class="t nav" id="t42" style="left:51.70px;top:338.84px;font-size:12px;color:#000;transform:scaleX(0.9720);">3D Objects</span>
<span class="t nav" id="t43" style="left:51.70px;top:362.84px;font-size:12px;color:#000;transform:scaleX(0.9925);">Desktop</span>
<span class="t nav" id="t44" style="left:51.70px;top:386.84px;font-size:12px;color:#000;transform:scaleX(1.0247);">Documents</span>
<span class="t nav" id="t45" style="left:51.70px;top:410.84px;font-size:12px;color:#000;transform:scaleX(1.0139);">Downloads</span>
<span class="t nav" id="t46" style="left:51.70px;top:434.84px;font-size:12px;color:#000;transform:scaleX(1.0401);">Music</span>
<span class="t nav" id="t47" style="left:51.70px;top:458.84px;font-size:12px;color:#000;transform:scaleX(0.9894);">Pictures</span>
<span class="t nav" id="t48" style="left:51.70px;top:482.84px;font-size:12px;color:#000;transform:scaleX(0.9840);">Videos</span>
<span class="t nav" id="t49" style="left:51.70px;top:506.84px;font-size:12px;color:#000;transform:scaleX(0.9614);">System (C:)</span>
<span class="t nav" id="t50" style="left:51.70px;top:530.84px;font-size:12px;color:#000;transform:scaleX(0.8615);">REFS (E:)</span>
<span class="t " id="t51" style="left:176.00px;top:155.84px;font-size:12px;color:#4c607a;transform:scaleX(1.0026);">Name</span>
<span class="t " id="t52" style="left:436.80px;top:155.84px;font-size:12px;color:#4c607a;transform:scaleX(1.0041);">Date modified</span>
<span class="t " id="t53" style="left:556.80px;top:155.84px;font-size:12px;color:#4c607a;transform:scaleX(0.9648);">Type</span>
<span class="t " id="t54" style="left:676.70px;top:155.84px;font-size:12px;color:#4c607a;transform:scaleX(0.8610);">Size</span>
<span class="t fl" id="t55" style="left:197.00px;top:182.84px;font-size:12px;color:#000;transform:scaleX(0.9578);">Reference Assemblies</span>
<span class="t fl" id="t56" style="left:436.80px;top:182.84px;font-size:12px;color:#6d6d6d;transform:scaleX(0.9710);">5/7/2018 9:59 AM</span>
<span class="t fl" id="t57" style="left:556.80px;top:182.84px;font-size:12px;color:#6d6d6d;transform:scaleX(0.9888);">File folder</span>
<span class="t fl" id="t58" style="left:197.00px;top:203.84px;font-size:12px;color:#000;transform:scaleX(0.9481);">SecurityKISS Tunnel</span>
<span class="t fl" id="t59" style="left:436.80px;top:203.84px;font-size:12px;color:#6d6d6d;transform:scaleX(0.9710);">2/2/2018 8:38 AM</span>
<span class="t fl" id="t60" style="left:556.80px;top:203.84px;font-size:12px;color:#6d6d6d;transform:scaleX(0.9888);">File folder</span>
<span class="t fl" id="t61" style="left:197.00px;top:224.84px;font-size:12px;color:#000;transform:scaleX(1.0202);">Uninstall Information</span>
<span class="t fl" id="t62" style="left:436.80px;top:224.84px;font-size:12px;color:#6d6d6d;transform:scaleX(0.9549);">7/10/2015 3:21 PM</span>
<span class="t fl" id="t63" style="left:556.80px;top:224.84px;font-size:12px;color:#6d6d6d;transform:scaleX(0.9888);">File folder</span>
<span class="t fl" id="t64" style="left:197.00px;top:245.84px;font-size:12px;color:#000;transform:scaleX(0.9312);">UNP</span>
<span class="t fl" id="t65" style="left:436.80px;top:245.84px;font-size:12px;color:#6d6d6d;transform:scaleX(0.9564);">5/7/2018 9:16 PM</span>
<span class="t fl" id="t66" style="left:556.80px;top:245.84px;font-size:12px;color:#6d6d6d;transform:scaleX(0.9888);">File folder</span>
<span class="t fl" id="t67" style="left:197.00px;top:266.84px;font-size:12px;color:#000;transform:scaleX(0.9906);">VMware</span>
<span class="t fl" id="t68" style="left:436.80px;top:266.84px;font-size:12px;color:#6d6d6d;transform:scaleX(0.9774);">9/1/2015 11:02 AM</span>
<span class="t fl" id="t69" style="left:556.80px;top:266.84px;font-size:12px;color:#6d6d6d;transform:scaleX(0.9888);">File folder</span>
<span class="t fl" id="t70" style="left:197.00px;top:287.84px;font-size:12px;color:#000;transform:scaleX(0.9922);">Windows Defender</span>
<span class="t fl" id="t71" style="left:436.80px;top:287.84px;font-size:12px;color:#6d6d6d;transform:scaleX(0.9687);">7/30/2018 8:21 AM</span>
<span class="t fl" id="t72" style="left:556.80px;top:287.84px;font-size:12px;color:#6d6d6d;transform:scaleX(0.9888);">File folder</span>
<span class="t fl" id="t73" style="left:197.00px;top:308.84px;font-size:12px;color:#000;transform:scaleX(0.9818);">Windows Defender Advanced Threat Pro...</span>
<span class="t fl" id="t74" style="left:436.80px;top:308.84px;font-size:12px;color:#6d6d6d;transform:scaleX(0.9687);">7/30/2018 8:21 AM</span>
<span class="t fl" id="t75" style="left:556.80px;top:308.84px;font-size:12px;color:#6d6d6d;transform:scaleX(0.9888);">File folder</span>
<span class="t fl" id="t76" style="left:197.00px;top:329.84px;font-size:12px;color:#000;transform:scaleX(1.0147);">Windows Mail</span>
<span class="t fl" id="t77" style="left:436.80px;top:329.84px;font-size:12px;color:#6d6d6d;transform:scaleX(0.9687);">5/7/2018 10:02 AM</span>
<span class="t fl" id="t78" style="left:556.80px;top:329.84px;font-size:12px;color:#6d6d6d;transform:scaleX(0.9888);">File folder</span>
<span class="t fl" id="t79" style="left:197.00px;top:350.84px;font-size:12px;color:#000;transform:scaleX(0.9881);">Windows Media Player</span>
<span class="t fl" id="t80" style="left:436.80px;top:350.84px;font-size:12px;color:#6d6d6d;transform:scaleX(0.9584);">4/12/2018 12:16 PM</span>
<span class="t fl" id="t81" style="left:556.80px;top:350.84px;font-size:12px;color:#6d6d6d;transform:scaleX(0.9888);">File folder</span>
<span class="t fl" id="t82" style="left:197.00px;top:371.84px;font-size:12px;color:#000;transform:scaleX(1.0256);">Windows Multimedia Platform</span>
<span class="t fl" id="t83" style="left:436.80px;top:371.84px;font-size:12px;color:#6d6d6d;transform:scaleX(0.9687);">4/12/2018 2:38 AM</span>
<span class="t fl" id="t84" style="left:556.80px;top:371.84px;font-size:12px;color:#6d6d6d;transform:scaleX(0.9888);">File folder</span>
<span class="t fl" id="t85" style="left:197.00px;top:392.84px;font-size:12px;color:#000;transform:scaleX(1.0291);">windows nt</span>
<span class="t fl" id="t86" style="left:436.80px;top:392.84px;font-size:12px;color:#6d6d6d;transform:scaleX(0.9687);">4/12/2018 2:38 AM</span>
<span class="t fl" id="t87" style="left:556.80px;top:392.84px;font-size:12px;color:#6d6d6d;transform:scaleX(0.9888);">File folder</span>
<span class="t fl" id="t88" style="left:197.00px;top:413.84px;font-size:12px;color:#000;transform:scaleX(0.9954);">Windows Photo Viewer</span>
<span class="t fl" id="t89" style="left:436.80px;top:413.84px;font-size:12px;color:#6d6d6d;transform:scaleX(0.9772);">6/14/2018 11:45 AM</span>
<span class="t fl" id="t90" style="left:556.80px;top:413.84px;font-size:12px;color:#6d6d6d;transform:scaleX(0.9888);">File folder</span>
<span class="t fl" id="t91" style="left:197.00px;top:434.84px;font-size:12px;color:#000;transform:scaleX(0.9763);">Windows Portable Devices</span>
<span class="t fl" id="t92" style="left:436.80px;top:434.84px;font-size:12px;color:#6d6d6d;transform:scaleX(0.9687);">4/12/2018 2:38 AM</span>
<span class="t fl" id="t93" style="left:556.80px;top:434.84px;font-size:12px;color:#6d6d6d;transform:scaleX(0.9888);">File folder</span>
<span class="t fl" id="t94" style="left:197.00px;top:455.84px;font-size:12px;color:#000;transform:scaleX(0.9893);">Windows Security</span>
<span class="t fl" id="t95" style="left:436.80px;top:455.84px;font-size:12px;color:#6d6d6d;transform:scaleX(0.9687);">4/12/2018 2:38 AM</span>
<span class="t fl" id="t96" style="left:556.80px;top:455.84px;font-size:12px;color:#6d6d6d;transform:scaleX(0.9888);">File folder</span>
<span class="t fl" id="t97" style="left:197.00px;top:476.84px;font-size:12px;color:#000;transform:scaleX(1.0042);">WindowsApps</span>
<span class="t fl" id="t98" style="left:436.80px;top:476.84px;font-size:12px;color:#6d6d6d;transform:scaleX(0.9710);">8/2/2018 8:38 AM</span>
<span class="t fl" id="t99" style="left:556.80px;top:476.84px;font-size:12px;color:#6d6d6d;transform:scaleX(0.9888);">File folder</span>
<span class="t fl" id="t100" style="left:197.00px;top:497.84px;font-size:12px;color:#000;transform:scaleX(0.9813);">WindowsPowerShell</span>
<span class="t fl" id="t101" style="left:436.80px;top:497.84px;font-size:12px;color:#6d6d6d;transform:scaleX(0.9687);">4/12/2018 2:38 AM</span>
<span class="t fl" id="t102" style="left:556.80px;top:497.84px;font-size:12px;color:#6d6d6d;transform:scaleX(0.9888);">File folder</span>
<span class="t fl" id="t103" style="left:197.00px;top:518.84px;font-size:12px;color:#000;transform:scaleX(0.9475);">WinRAR</span>
<span class="t fl" id="t104" style="left:436.80px;top:518.84px;font-size:12px;color:#6d6d6d;transform:scaleX(0.9691);">5/31/2015 10:46 AM</span>
<span class="t fl" id="t105" style="left:556.80px;top:518.84px;font-size:12px;color:#6d6d6d;transform:scaleX(0.9888);">File folder</span>
<span class="t " id="t106" style="left:13.00px;top:541.84px;font-size:12px;color:#1e395b;transform:scaleX(0.9833);">22 items</span>
<span class="t " id="t107" style="left:78.30px;top:541.84px;font-size:12px;color:#1e395b;transform:scaleX(0.9775);">1 item selected</span>
<span class="t dlg" id="t108" style="left:754.25px;top:165.84px;font-size:12px;color:#000;transform:scaleX(0.9854);">WindowsApps Properties</span>
<span class="t dlg" id="t109" style="left:738.75px;top:199.84px;font-size:12px;color:#000;transform:scaleX(0.8746);">General</span>
<span class="t dlg" id="t110" style="left:788.00px;top:199.84px;font-size:12px;color:#000;transform:scaleX(0.8604);">Sharing</span>
<span class="t dlg" id="t111" style="left:836.25px;top:197.84px;font-size:12px;color:#000;transform:scaleX(0.8614);">Security</span>
<span class="t dlg" id="t112" style="left:886.25px;top:199.84px;font-size:12px;color:#000;transform:scaleX(0.8704);">Previous Versions</span>
<span class="t dlg" id="t113" style="left:981.50px;top:199.84px;font-size:12px;color:#000;transform:scaleX(0.8573);">Customize</span>
<span class="t dlg" id="t114" style="left:745.75px;top:227.84px;font-size:12px;color:#000;transform:scaleX(0.8911);">Object name:</span>
<span class="t dlg" id="t115" style="left:824.50px;top:227.84px;font-size:12px;color:#000;transform:scaleX(0.8950);">C:\Program Files\WindowsApps</span>
<span class="t dlg" id="t116" style="left:767.00px;top:265.84px;font-size:12px;color:#000;transform:scaleX(0.8831);">You must have Read permissions to view the properties of this</span>
<span class="t dlg" id="t117" style="left:767.00px;top:278.84px;font-size:12px;color:#000;transform:scaleX(0.8937);">object.</span>
<span class="t dlg" id="t118" style="left:767.00px;top:304.84px;font-size:12px;color:#000;transform:scaleX(0.9062);">Click Advanced to continue.</span>
<span class="t dlg" id="t119" style="left:745.75px;top:531.84px;font-size:12px;color:#000;transform:scaleX(0.8774);">For special permissions or advanced settings,</span>
<span class="t dlg" id="t120" style="left:745.75px;top:544.84px;font-size:12px;color:#000;transform:scaleX(0.9351);">click Advanced.</span>
<span class="t dlg" id="t121" style="left:995.75px;top:536.84px;font-size:12px;color:#000;transform:scaleX(0.9012);">Advanced</span>
<span class="t dlg" id="t122" style="left:872.50px;top:611.84px;font-size:12px;color:#000;transform:scaleX(0.9283);">OK</span>
<span class="t dlg" id="t123" style="left:944.50px;top:611.84px;font-size:12px;color:#000;transform:scaleX(0.8994);">Cancel</span>
<span class="t dlg" id="t124" style="left:1029.50px;top:611.84px;font-size:12px;color:#838383;transform:scaleX(0.8524);">Apply</span>

</body></html>
